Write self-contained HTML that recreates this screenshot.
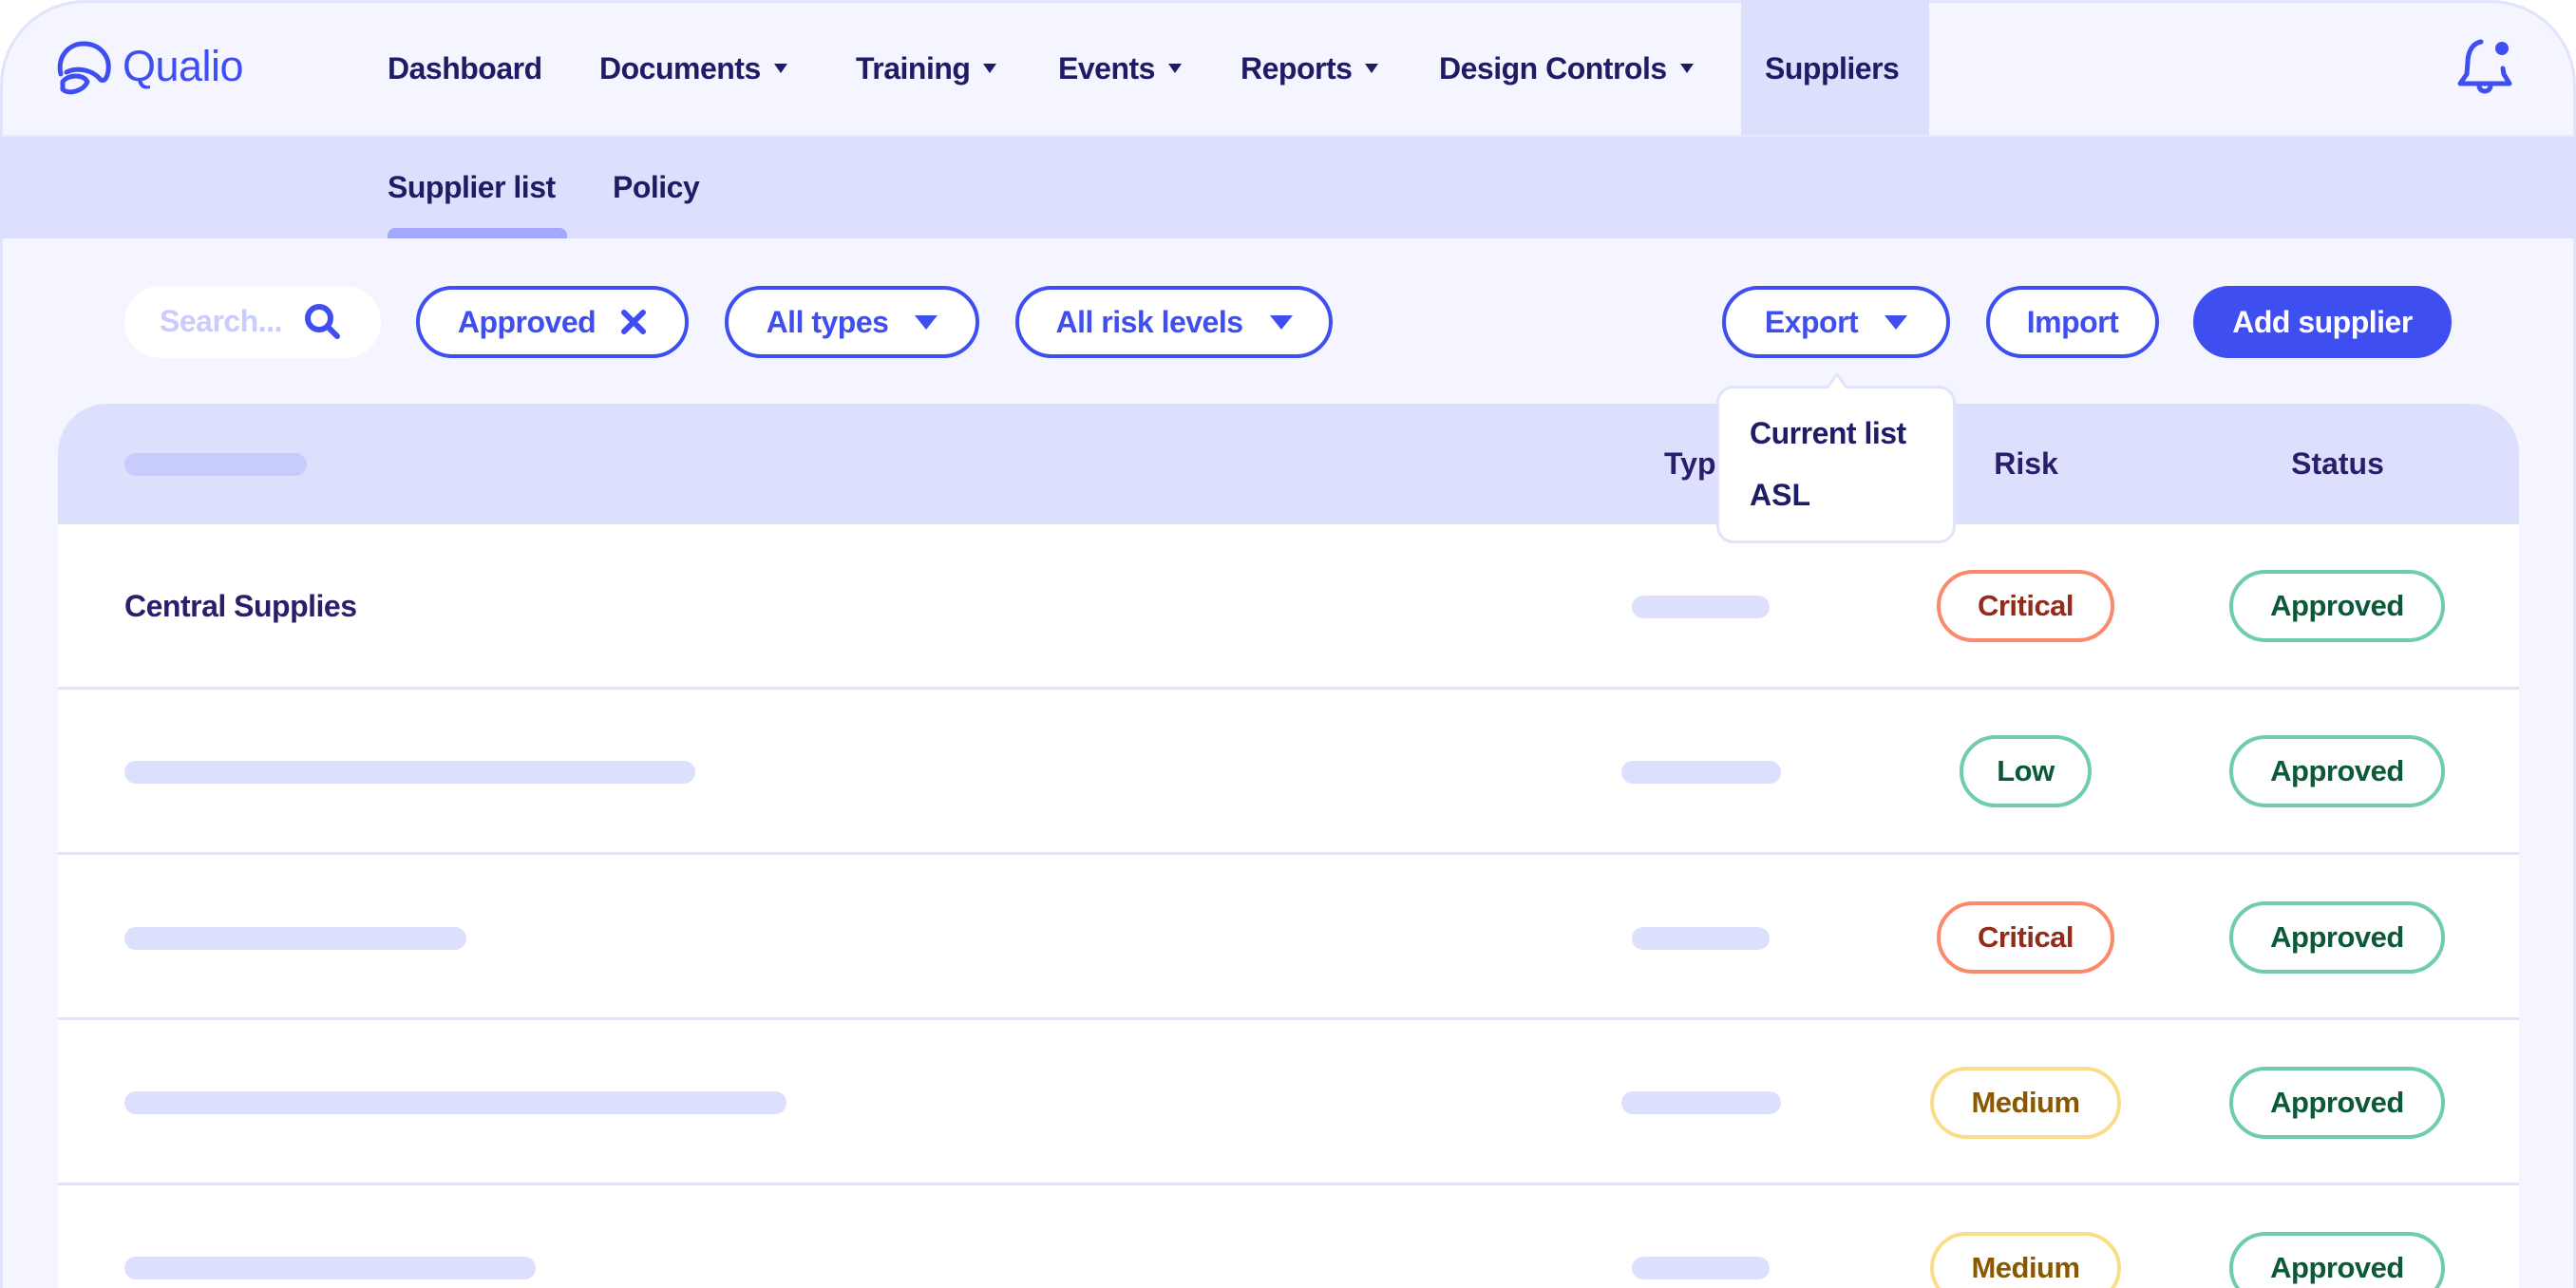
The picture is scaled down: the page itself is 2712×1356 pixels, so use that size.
<!DOCTYPE html>
<html><head><meta charset="utf-8"><style>
*{box-sizing:border-box;margin:0;padding:0}
html,body{width:2712px;height:1356px;overflow:hidden}
body{background:#fff;font-family:"Liberation Sans",sans-serif;position:relative}
.frame{position:absolute;left:0;top:0;width:2712px;height:1356px;background:#f4f5fe;border:3px solid #e0e3fb;border-bottom:none;border-radius:90px 90px 0 0}
.a{position:absolute}
.nav{font-size:32px;font-weight:bold;color:#1f1c66;top:54px;letter-spacing:-0.5px;white-space:nowrap}
.car{display:inline-block;width:0;height:0;border-left:7px solid transparent;border-right:7px solid transparent;border-top:10px solid #1f1c66;margin-left:14px;vertical-align:middle;position:relative;top:-3px}
.btn{position:absolute;top:301px;height:76px;border:4px solid #3f4ef0;border-radius:38px;background:#fff;color:#3f4ef0;font-size:32px;font-weight:bold;display:flex;align-items:center;justify-content:center;letter-spacing:-0.5px;white-space:nowrap}
.tri{display:inline-block;width:0;height:0;border-left:12px solid transparent;border-right:12px solid transparent;border-top:15px solid #3f4ef0;margin-left:28px}
.row{position:absolute;left:61px;width:2591px;height:174px;background:#fff;border-bottom:3px solid #e0e3fb}
.bar{position:absolute;height:24px;border-radius:12px;background:#dde0fd}
.badge{position:absolute;height:76px;border:4px solid;border-radius:38px;background:#fff;font-size:31px;font-weight:bold;display:flex;align-items:center;justify-content:center;letter-spacing:-0.5px}
.crit{border-color:#fb8a6c;color:#932b1a}
.low{border-color:#6fcda8;color:#0b5a37}
.med{border-color:#fbdd88;color:#8a5800}
</style></head><body>
<div class="frame"></div>
<!-- top nav -->
<div class="a" style="left:1833px;top:0;width:198px;height:142px;background:#dde0fd"></div>
<svg class="a" style="left:58px;top:42px" width="64" height="62" viewBox="0 0 64 62" fill="none" stroke="#3f4ef0" stroke-width="5" stroke-linecap="round" stroke-linejoin="round">
<path d="M6 36 C2 18 14 4 30 4 C46 4 58 16 56 32 C55 40 52 44 48 42 C40 32 24 28 12 34"/>
<path d="M8 44 C14 36 30 36 34 44 C30 54 14 58 8 52 Z"/>
</svg>
<div class="a" style="left:129px;top:44px;font-size:45px;color:#3f4ef0;letter-spacing:-0.5px">Qualio</div>
<div class="a nav" style="left:408px">Dashboard</div>
<div class="a nav" style="left:631px">Documents<span class="car"></span></div>
<div class="a nav" style="left:901px">Training<span class="car"></span></div>
<div class="a nav" style="left:1114px">Events<span class="car"></span></div>
<div class="a nav" style="left:1306px">Reports<span class="car"></span></div>
<div class="a nav" style="left:1515px">Design Controls<span class="car"></span></div>
<div class="a nav" style="left:1858px">Suppliers</div>
<svg class="a" style="left:2582px;top:38px" width="72" height="68" viewBox="0 0 72 68" fill="none" stroke="#3f4ef0" stroke-width="5" stroke-linecap="round" stroke-linejoin="round">
<path d="M30 6 C20 8 16 18 16 28 L15 40 L8 50 L60 50 L54 40 L53 34"/>
<path d="M28 52 C28 60 40 60 40 52"/>
<circle cx="52" cy="13" r="7" fill="#3f4ef0" stroke="none"/>
</svg>
<!-- subnav -->
<div class="a" style="left:0;top:142px;width:2712px;height:109px;background:#dde0fd;border-top:2px solid #e6e8fc"></div>
<div class="a nav" style="left:408px;top:179px">Supplier list</div>
<div class="a nav" style="left:645px;top:179px">Policy</div>
<div class="a" style="left:408px;top:240px;width:189px;height:11px;background:#a2a8fb;border-radius:8px 8px 0 0"></div>
<!-- toolbar -->
<div class="a" style="left:131px;top:301px;width:270px;height:76px;background:#fff;border-radius:38px"></div>
<div class="a" style="left:168px;top:320px;font-size:32px;font-weight:bold;color:#c9cdfb;letter-spacing:-0.5px">Search...</div>
<svg class="a" style="left:319px;top:318px" width="42" height="42" viewBox="0 0 42 42" fill="none" stroke="#3f4ef0" stroke-width="6" stroke-linecap="round"><circle cx="17" cy="17" r="12"/><path d="M26 26 L36 36"/></svg>
<div class="btn" style="left:438px;width:287px">Approved<svg style="margin-left:26px" width="28" height="28" viewBox="0 0 28 28" stroke="#3f4ef0" stroke-width="6" stroke-linecap="round"><path d="M4 4L24 24M24 4L4 24"/></svg></div>
<div class="btn" style="left:763px;width:268px">All types<span class="tri"></span></div>
<div class="btn" style="left:1069px;width:334px">All risk levels<span class="tri"></span></div>
<div class="btn" style="left:1813px;width:240px">Export<span class="tri"></span></div>
<div class="btn" style="left:2091px;width:182px">Import</div>
<div class="btn" style="left:2309px;width:272px;background:#3f4ef0;color:#fff">Add supplier</div>
<!-- table header -->
<div class="a" style="left:61px;top:425px;width:2591px;height:127px;background:#dde0fd;border-radius:52px 52px 0 0"></div>
<div class="a" style="left:131px;top:477px;width:192px;height:24px;border-radius:12px;background:#c8ccfa"></div>
<div class="a" style="left:1752px;top:470px;font-size:32px;font-weight:bold;color:#2a1e6a">Type</div>
<div class="a" style="left:2033px;width:200px;text-align:center;top:470px;font-size:32px;font-weight:bold;color:#2a1e6a">Risk</div>
<div class="a" style="left:2361px;width:200px;text-align:center;top:470px;font-size:32px;font-weight:bold;color:#2a1e6a">Status</div>
<!-- rows -->
<div class="row" style="top:552px"></div>
<div class="row" style="top:726px"></div>
<div class="row" style="top:900px"></div>
<div class="row" style="top:1074px"></div>
<div class="row" style="top:1248px;height:108px;border:none"></div>
<div class="a" style="left:131px;top:620px;font-size:32px;font-weight:bold;color:#2a1e6a;letter-spacing:-0.5px">Central Supplies</div>
<div class="bar" style="left:1718px;top:627px;width:145px"></div>
<div class="bar" style="left:131px;top:801px;width:601px"></div><div class="bar" style="left:1707px;top:801px;width:168px"></div>
<div class="bar" style="left:131px;top:976px;width:360px"></div><div class="bar" style="left:1718px;top:976px;width:145px"></div>
<div class="bar" style="left:131px;top:1149px;width:697px"></div><div class="bar" style="left:1707px;top:1149px;width:168px"></div>
<div class="bar" style="left:131px;top:1323px;width:433px"></div><div class="bar" style="left:1718px;top:1323px;width:145px"></div>

<div class="badge crit" style="left:2039px;top:600px;width:187px">Critical</div>
<div class="badge low" style="left:2063px;top:774px;width:139px">Low</div>
<div class="badge crit" style="left:2039px;top:949px;width:187px">Critical</div>
<div class="badge med" style="left:2032px;top:1123px;width:201px">Medium</div>
<div class="badge med" style="left:2032px;top:1297px;width:201px">Medium</div>
<div class="badge low" style="left:2347px;top:600px;width:227px">Approved</div>
<div class="badge low" style="left:2347px;top:774px;width:227px">Approved</div>
<div class="badge low" style="left:2347px;top:949px;width:227px">Approved</div>
<div class="badge low" style="left:2347px;top:1123px;width:227px">Approved</div>
<div class="badge low" style="left:2347px;top:1297px;width:227px">Approved</div>
<!-- dropdown -->
<div class="a" style="left:1807px;top:406px;width:252px;height:166px;background:#fff;border:3px solid #e0e3fb;border-radius:18px"></div>
<div class="a" style="left:1922px;top:392px;width:0;height:0;border-left:12px solid transparent;border-right:12px solid transparent;border-bottom:16px solid #e0e3fb"></div>
<div class="a" style="left:1925px;top:396px;width:0;height:0;border-left:9px solid transparent;border-right:9px solid transparent;border-bottom:13px solid #fff"></div>
<div class="a" style="left:1842px;top:438px;font-size:32px;font-weight:bold;color:#1f1c66;letter-spacing:-0.5px">Current list</div>
<div class="a" style="left:1842px;top:503px;font-size:32px;font-weight:bold;color:#1f1c66">ASL</div>
</body></html>
